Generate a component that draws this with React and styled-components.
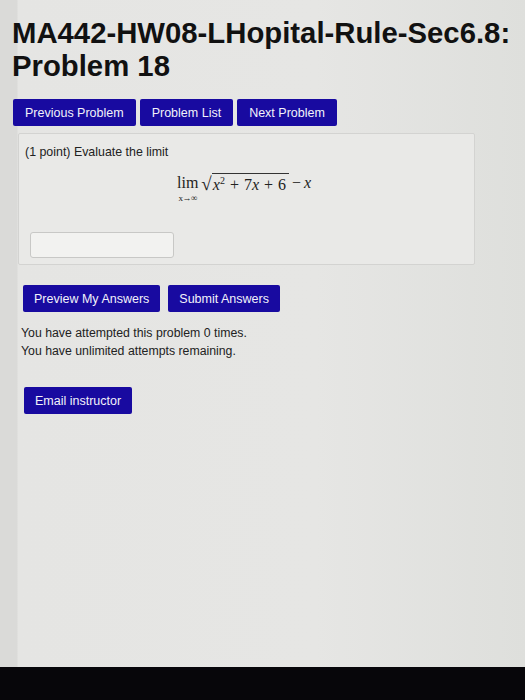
import React from 'react'
import styled, { createGlobalStyle } from 'styled-components'

const GlobalStyle = createGlobalStyle`
html, body {
  margin: 0;
  padding: 0;
  background: #e3e3e1;
}
body {
  font-family: "Liberation Sans", Arial, sans-serif;
}
`

const Screen = styled.div`
width: 525px;
height: 700px;
display: flex;
flex-direction: column;
background: linear-gradient(90deg, #dadad8 0px, #dadad8 17px, #e5e5e3 18px, #e6e6e4 60%, #dedfdc 100%);
overflow: hidden;
`

const Page = styled.div`
flex: 1;
padding: 16px 12px 0 12px;
`

const Title = styled.h1`
margin: 0;
font-size: 29.3px;
line-height: 33px;
font-weight: bold;
color: #111;
white-space: nowrap;
`

const NavRow = styled.div`
display: flex;
gap: 4px;
margin-top: 17px;
margin-left: 1px;
`

const Button = styled.button`
height: 27px;
padding: 0 ${p => p.$pad || 11}px;
background: #180aa0;
color: #f2f2fa;
border: none;
border-radius: 2px;
font-family: "Liberation Sans", Arial, sans-serif;
font-size: 12.5px;
`

const Panel = styled.div`
margin: 7px 38px 0 6px;
height: 132px;
box-sizing: border-box;
background: #e9e9e7;
border: 1px solid #d3d3d1;
border-radius: 2px;
padding: 11px 6px 0 6px;
display: flex;
flex-direction: column;
`

const Prompt = styled.div`
font-size: 12.4px;
color: #222;
`

const MathRow = styled.div`
display: flex;
align-items: flex-start;
margin-top: 14px;
margin-left: 152px;
font-family: "Liberation Serif", "Times New Roman", serif;
color: #222;
font-size: 16px;
line-height: 20px;
`

const Lim = styled.div`
display: flex;
flex-direction: column;
align-items: center;
margin-right: 3px;
`

const Sub = styled.span`
font-size: 9px;
line-height: 9px;
margin-top: 1px;
letter-spacing: -0.5px;
`

const Radical = styled.span`
display: inline-flex;
align-items: flex-start;
`

const RootSign = styled.span`
font-size: 19px;
line-height: 20px;
margin-top: 1px;
`

const Radicand = styled.span`
border-top: 1px solid #333;
padding: 1px 3px 0 1px;
font-style: italic;
`

const Op = styled.span`
font-style: normal;
margin: 0 ${p => p.$gap || 5}px;
`

const Num = styled.span`
font-style: normal;
`

const Sup = styled.sup`
font-size: 10px;
font-style: normal;
vertical-align: 6px;
line-height: 0;
`

const AnswerInput = styled.input`
margin-top: 29px;
margin-left: 5px;
width: 144px;
height: 26px;
box-sizing: border-box;
background: #f2f2f0;
border: 1px solid #c8c8c6;
border-radius: 3px;
`

const ActionRow = styled.div`
display: flex;
gap: 8px;
margin-top: 20px;
margin-left: 11px;
`

const Info = styled.div`
margin-top: 12px;
margin-left: 9px;
font-size: 12.3px;
line-height: 18px;
color: #222;
`

const EmailRow = styled.div`
margin-top: 27px;
margin-left: 12px;
`

const BottomBar = styled.div`
height: 33px;
background: #07060a;
`

const App = () => {
    return (
        <>
            <GlobalStyle />
            <Screen>
                <Page>
                    <Title>MA442-HW08-LHopital-Rule-Sec6.8:<br />Problem 18</Title>
                    <NavRow>
                        <Button $pad={12}>Previous Problem</Button>
                        <Button $pad={12}>Problem List</Button>
                        <Button $pad={12}>Next Problem</Button>
                    </NavRow>
                    <Panel>
                        <Prompt>(1 point) Evaluate the limit</Prompt>
                        <MathRow>
                            <Lim>
                                <span>lim</span>
                                <Sub>x→∞</Sub>
                            </Lim>
                            <Radical>
                                <RootSign>√</RootSign>
                                <Radicand>x<Sup>2</Sup><Op>+</Op><Num>7</Num>x<Op>+</Op><Num>6</Num></Radicand>
                            </Radical>
                            <Op $gap={3}>−</Op><i>x</i>
                        </MathRow>
                        <AnswerInput type="text" />
                    </Panel>
                    <ActionRow>
                        <Button $pad={11}>Preview My Answers</Button>
                        <Button $pad={11}>Submit Answers</Button>
                    </ActionRow>
                    <Info>
                        You have attempted this problem 0 times.<br />
                        You have unlimited attempts remaining.
                    </Info>
                    <EmailRow>
                        <Button $pad={11}>Email instructor</Button>
                    </EmailRow>
                </Page>
                <BottomBar />
            </Screen>
        </>
    )
}

export default App
